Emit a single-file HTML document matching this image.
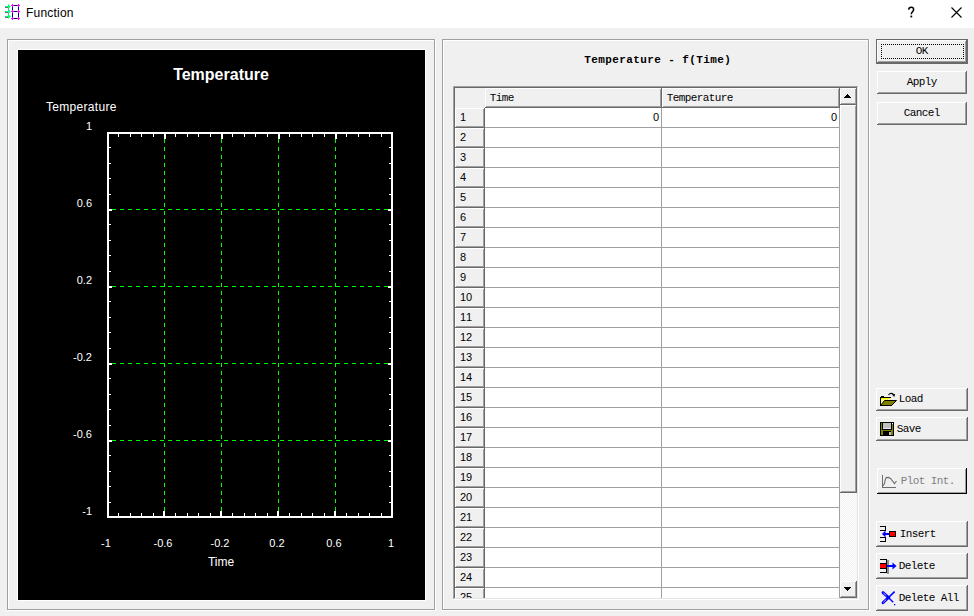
<!DOCTYPE html><html><head><meta charset="utf-8"><style>html,body{margin:0;padding:0;}body{width:974px;height:616px;position:relative;overflow:hidden;background:#f0f0f0;}div{box-sizing:border-box}</style></head><body>
<div style="position:absolute;left:0px;top:0px;width:974px;height:28px;background:#ffffff;"></div>
<svg style="position:absolute;left:0;top:0" width="30" height="28" shape-rendering="crispEdges">
<rect x="5" y="7" width="4" height="1" fill="#7a6a6a"/><rect x="5" y="12" width="4" height="1" fill="#7a6a6a"/><rect x="5" y="17" width="4" height="1" fill="#7a6a6a"/>
<rect x="8" y="8" width="1" height="9" fill="#808080"/>
<rect x="5" y="6" width="4" height="1" fill="#00ff80"/><rect x="5" y="11" width="4" height="1" fill="#00ff80"/><rect x="5" y="16" width="4" height="1" fill="#00ff80"/>
<polygon points="8,4 11,6.5 8,9" fill="#00ff80" shape-rendering="auto"/>
<polygon points="8,9 11,11.5 8,14" fill="#00ff80" shape-rendering="auto"/>
<polygon points="8,14 11,16.5 8,19" fill="#00ff80" shape-rendering="auto"/>
<rect x="12" y="5" width="1" height="14" fill="#000080"/><rect x="18" y="5" width="1" height="14" fill="#000080"/>
<rect x="12" y="5" width="7" height="1" fill="#000080"/><rect x="12" y="11" width="7" height="1" fill="#000080"/><rect x="12" y="18" width="7" height="1" fill="#000080"/>
<rect x="11" y="5" width="3" height="1" fill="#ff00ff"/><rect x="12" y="4" width="1" height="3" fill="#ff00ff"/><rect x="11" y="11" width="3" height="1" fill="#ff00ff"/><rect x="12" y="10" width="1" height="3" fill="#ff00ff"/><rect x="11" y="18" width="3" height="1" fill="#ff00ff"/><rect x="12" y="17" width="1" height="3" fill="#ff00ff"/><rect x="17" y="5" width="3" height="1" fill="#ff00ff"/><rect x="18" y="4" width="1" height="3" fill="#ff00ff"/><rect x="17" y="11" width="3" height="1" fill="#ff00ff"/><rect x="18" y="10" width="1" height="3" fill="#ff00ff"/><rect x="17" y="18" width="3" height="1" fill="#ff00ff"/><rect x="18" y="17" width="1" height="3" fill="#ff00ff"/>
</svg>
<svg style="position:absolute;left:900px;top:0" width="20" height="28"><path d="M8.6 9.6 C8.8 7.6 10.2 7.2 11.2 7.2 C12.6 7.2 13.6 8 13.6 9.4 C13.6 11.6 11.3 11.8 11.3 14.2" stroke="#000" stroke-width="1.5" fill="none"/><rect x="10.4" y="15.6" width="1.8" height="1.8" fill="#000"/></svg>
<svg style="position:absolute;left:950px;top:6px" width="13" height="13"><path d="M1.5 1.5 L11.5 11.5 M11.5 1.5 L1.5 11.5" stroke="#000" stroke-width="1.1" fill="none"/></svg>
<div style="position:absolute;left:7px;top:39px;width:428px;height:1px;background:#a0a0a0;"></div>
<div style="position:absolute;left:7px;top:39px;width:1px;height:571px;background:#a0a0a0;"></div>
<div style="position:absolute;left:8px;top:40px;width:428px;height:1px;background:#ffffff;"></div>
<div style="position:absolute;left:8px;top:40px;width:1px;height:571px;background:#ffffff;"></div>
<div style="position:absolute;left:8px;top:609px;width:427px;height:1px;background:#a0a0a0;"></div>
<div style="position:absolute;left:434px;top:40px;width:1px;height:570px;background:#a0a0a0;"></div>
<div style="position:absolute;left:7px;top:610px;width:429px;height:1px;background:#ffffff;"></div>
<div style="position:absolute;left:435px;top:39px;width:1px;height:572px;background:#ffffff;"></div>
<div style="position:absolute;left:442px;top:39px;width:427px;height:1px;background:#a0a0a0;"></div>
<div style="position:absolute;left:442px;top:39px;width:1px;height:571px;background:#a0a0a0;"></div>
<div style="position:absolute;left:443px;top:40px;width:427px;height:1px;background:#ffffff;"></div>
<div style="position:absolute;left:443px;top:40px;width:1px;height:571px;background:#ffffff;"></div>
<div style="position:absolute;left:443px;top:609px;width:426px;height:1px;background:#a0a0a0;"></div>
<div style="position:absolute;left:868px;top:40px;width:1px;height:570px;background:#a0a0a0;"></div>
<div style="position:absolute;left:442px;top:610px;width:428px;height:1px;background:#ffffff;"></div>
<div style="position:absolute;left:869px;top:39px;width:1px;height:572px;background:#ffffff;"></div>
<div style="position:absolute;left:17px;top:49px;width:409px;height:552px;background:#ffffff;"></div>
<div style="position:absolute;left:18px;top:50px;width:407px;height:550px;background:#000;"></div>
<svg style="position:absolute;left:0;top:0" width="974" height="616" shape-rendering="crispEdges"><line x1="164.5" y1="139" x2="164.5" y2="516" stroke="#00ff00" stroke-width="1" stroke-dasharray="4 4"/><line x1="221.5" y1="139" x2="221.5" y2="516" stroke="#00ff00" stroke-width="1" stroke-dasharray="4 4"/><line x1="278.5" y1="139" x2="278.5" y2="516" stroke="#00ff00" stroke-width="1" stroke-dasharray="4 4"/><line x1="335.5" y1="139" x2="335.5" y2="516" stroke="#00ff00" stroke-width="1" stroke-dasharray="4 4"/><line x1="112" y1="209.5" x2="391" y2="209.5" stroke="#00ff00" stroke-width="1" stroke-dasharray="4 4"/><line x1="112" y1="286.5" x2="391" y2="286.5" stroke="#00ff00" stroke-width="1" stroke-dasharray="4 4"/><line x1="112" y1="363.5" x2="391" y2="363.5" stroke="#00ff00" stroke-width="1" stroke-dasharray="4 4"/><line x1="112" y1="440.5" x2="391" y2="440.5" stroke="#00ff00" stroke-width="1" stroke-dasharray="4 4"/><rect x="107" y="132" width="286" height="2" fill="#fff"/><rect x="107" y="516" width="286" height="2" fill="#fff"/><rect x="107" y="132" width="2" height="386" fill="#fff"/><rect x="391" y="132" width="2" height="386" fill="#fff"/><rect x="118" y="134" width="1" height="3" fill="#fff"/><rect x="118" y="513" width="1" height="3" fill="#fff"/><rect x="109" y="147" width="2" height="1" fill="#fff"/><rect x="389" y="147" width="2" height="1" fill="#fff"/><rect x="130" y="134" width="1" height="3" fill="#fff"/><rect x="130" y="513" width="1" height="3" fill="#fff"/><rect x="109" y="163" width="2" height="1" fill="#fff"/><rect x="389" y="163" width="2" height="1" fill="#fff"/><rect x="141" y="134" width="1" height="3" fill="#fff"/><rect x="141" y="513" width="1" height="3" fill="#fff"/><rect x="109" y="178" width="2" height="1" fill="#fff"/><rect x="389" y="178" width="2" height="1" fill="#fff"/><rect x="153" y="134" width="1" height="3" fill="#fff"/><rect x="153" y="513" width="1" height="3" fill="#fff"/><rect x="109" y="194" width="2" height="1" fill="#fff"/><rect x="389" y="194" width="2" height="1" fill="#fff"/><rect x="164" y="134" width="2" height="5" fill="#fff"/><rect x="163" y="511" width="2" height="5" fill="#fff"/><rect x="109" y="209" width="3" height="2" fill="#fff"/><rect x="388" y="209" width="3" height="2" fill="#fff"/><rect x="175" y="134" width="1" height="3" fill="#fff"/><rect x="175" y="513" width="1" height="3" fill="#fff"/><rect x="109" y="224" width="2" height="1" fill="#fff"/><rect x="389" y="224" width="2" height="1" fill="#fff"/><rect x="187" y="134" width="1" height="3" fill="#fff"/><rect x="187" y="513" width="1" height="3" fill="#fff"/><rect x="109" y="240" width="2" height="1" fill="#fff"/><rect x="389" y="240" width="2" height="1" fill="#fff"/><rect x="198" y="134" width="1" height="3" fill="#fff"/><rect x="198" y="513" width="1" height="3" fill="#fff"/><rect x="109" y="255" width="2" height="1" fill="#fff"/><rect x="389" y="255" width="2" height="1" fill="#fff"/><rect x="210" y="134" width="1" height="3" fill="#fff"/><rect x="210" y="513" width="1" height="3" fill="#fff"/><rect x="109" y="271" width="2" height="1" fill="#fff"/><rect x="389" y="271" width="2" height="1" fill="#fff"/><rect x="221" y="134" width="2" height="5" fill="#fff"/><rect x="220" y="511" width="2" height="5" fill="#fff"/><rect x="109" y="286" width="3" height="2" fill="#fff"/><rect x="388" y="286" width="3" height="2" fill="#fff"/><rect x="232" y="134" width="1" height="3" fill="#fff"/><rect x="232" y="513" width="1" height="3" fill="#fff"/><rect x="109" y="301" width="2" height="1" fill="#fff"/><rect x="389" y="301" width="2" height="1" fill="#fff"/><rect x="244" y="134" width="1" height="3" fill="#fff"/><rect x="244" y="513" width="1" height="3" fill="#fff"/><rect x="109" y="317" width="2" height="1" fill="#fff"/><rect x="389" y="317" width="2" height="1" fill="#fff"/><rect x="255" y="134" width="1" height="3" fill="#fff"/><rect x="255" y="513" width="1" height="3" fill="#fff"/><rect x="109" y="332" width="2" height="1" fill="#fff"/><rect x="389" y="332" width="2" height="1" fill="#fff"/><rect x="267" y="134" width="1" height="3" fill="#fff"/><rect x="267" y="513" width="1" height="3" fill="#fff"/><rect x="109" y="348" width="2" height="1" fill="#fff"/><rect x="389" y="348" width="2" height="1" fill="#fff"/><rect x="278" y="134" width="2" height="5" fill="#fff"/><rect x="277" y="511" width="2" height="5" fill="#fff"/><rect x="109" y="363" width="3" height="2" fill="#fff"/><rect x="388" y="363" width="3" height="2" fill="#fff"/><rect x="289" y="134" width="1" height="3" fill="#fff"/><rect x="289" y="513" width="1" height="3" fill="#fff"/><rect x="109" y="378" width="2" height="1" fill="#fff"/><rect x="389" y="378" width="2" height="1" fill="#fff"/><rect x="301" y="134" width="1" height="3" fill="#fff"/><rect x="301" y="513" width="1" height="3" fill="#fff"/><rect x="109" y="394" width="2" height="1" fill="#fff"/><rect x="389" y="394" width="2" height="1" fill="#fff"/><rect x="312" y="134" width="1" height="3" fill="#fff"/><rect x="312" y="513" width="1" height="3" fill="#fff"/><rect x="109" y="409" width="2" height="1" fill="#fff"/><rect x="389" y="409" width="2" height="1" fill="#fff"/><rect x="324" y="134" width="1" height="3" fill="#fff"/><rect x="324" y="513" width="1" height="3" fill="#fff"/><rect x="109" y="425" width="2" height="1" fill="#fff"/><rect x="389" y="425" width="2" height="1" fill="#fff"/><rect x="335" y="134" width="2" height="5" fill="#fff"/><rect x="334" y="511" width="2" height="5" fill="#fff"/><rect x="109" y="440" width="3" height="2" fill="#fff"/><rect x="388" y="440" width="3" height="2" fill="#fff"/><rect x="346" y="134" width="1" height="3" fill="#fff"/><rect x="346" y="513" width="1" height="3" fill="#fff"/><rect x="109" y="455" width="2" height="1" fill="#fff"/><rect x="389" y="455" width="2" height="1" fill="#fff"/><rect x="358" y="134" width="1" height="3" fill="#fff"/><rect x="358" y="513" width="1" height="3" fill="#fff"/><rect x="109" y="471" width="2" height="1" fill="#fff"/><rect x="389" y="471" width="2" height="1" fill="#fff"/><rect x="369" y="134" width="1" height="3" fill="#fff"/><rect x="369" y="513" width="1" height="3" fill="#fff"/><rect x="109" y="486" width="2" height="1" fill="#fff"/><rect x="389" y="486" width="2" height="1" fill="#fff"/><rect x="381" y="134" width="1" height="3" fill="#fff"/><rect x="381" y="513" width="1" height="3" fill="#fff"/><rect x="109" y="502" width="2" height="1" fill="#fff"/><rect x="389" y="502" width="2" height="1" fill="#fff"/></svg>
<div style="position:absolute;left:453px;top:86px;width:405px;height:1px;background:#a0a0a0;"></div>
<div style="position:absolute;left:453px;top:86px;width:1px;height:513px;background:#a0a0a0;"></div>
<div style="position:absolute;left:454px;top:87px;width:403px;height:1px;background:#696969;"></div>
<div style="position:absolute;left:454px;top:87px;width:1px;height:511px;background:#696969;"></div>
<div style="position:absolute;left:454px;top:598px;width:404px;height:1px;background:#e3e3e3;"></div>
<div style="position:absolute;left:857px;top:87px;width:1px;height:512px;background:#e3e3e3;"></div>
<div style="position:absolute;left:453px;top:599px;width:406px;height:1px;background:#ffffff;"></div>
<div style="position:absolute;left:858px;top:86px;width:1px;height:514px;background:#ffffff;"></div>
<div style="position:absolute;left:485px;top:108px;width:355px;height:490px;background:#ffffff;"></div>
<div style="position:absolute;left:485px;top:127px;width:355px;height:1px;background:#a0a0a0;"></div>
<div style="position:absolute;left:485px;top:147px;width:355px;height:1px;background:#a0a0a0;"></div>
<div style="position:absolute;left:485px;top:167px;width:355px;height:1px;background:#a0a0a0;"></div>
<div style="position:absolute;left:485px;top:187px;width:355px;height:1px;background:#a0a0a0;"></div>
<div style="position:absolute;left:485px;top:207px;width:355px;height:1px;background:#a0a0a0;"></div>
<div style="position:absolute;left:485px;top:227px;width:355px;height:1px;background:#a0a0a0;"></div>
<div style="position:absolute;left:485px;top:247px;width:355px;height:1px;background:#a0a0a0;"></div>
<div style="position:absolute;left:485px;top:267px;width:355px;height:1px;background:#a0a0a0;"></div>
<div style="position:absolute;left:485px;top:287px;width:355px;height:1px;background:#a0a0a0;"></div>
<div style="position:absolute;left:485px;top:307px;width:355px;height:1px;background:#a0a0a0;"></div>
<div style="position:absolute;left:485px;top:327px;width:355px;height:1px;background:#a0a0a0;"></div>
<div style="position:absolute;left:485px;top:347px;width:355px;height:1px;background:#a0a0a0;"></div>
<div style="position:absolute;left:485px;top:367px;width:355px;height:1px;background:#a0a0a0;"></div>
<div style="position:absolute;left:485px;top:387px;width:355px;height:1px;background:#a0a0a0;"></div>
<div style="position:absolute;left:485px;top:407px;width:355px;height:1px;background:#a0a0a0;"></div>
<div style="position:absolute;left:485px;top:427px;width:355px;height:1px;background:#a0a0a0;"></div>
<div style="position:absolute;left:485px;top:447px;width:355px;height:1px;background:#a0a0a0;"></div>
<div style="position:absolute;left:485px;top:467px;width:355px;height:1px;background:#a0a0a0;"></div>
<div style="position:absolute;left:485px;top:487px;width:355px;height:1px;background:#a0a0a0;"></div>
<div style="position:absolute;left:485px;top:507px;width:355px;height:1px;background:#a0a0a0;"></div>
<div style="position:absolute;left:485px;top:527px;width:355px;height:1px;background:#a0a0a0;"></div>
<div style="position:absolute;left:485px;top:547px;width:355px;height:1px;background:#a0a0a0;"></div>
<div style="position:absolute;left:485px;top:567px;width:355px;height:1px;background:#a0a0a0;"></div>
<div style="position:absolute;left:485px;top:587px;width:355px;height:1px;background:#a0a0a0;"></div>
<div style="position:absolute;left:661px;top:108px;width:1px;height:490px;background:#a0a0a0;"></div>
<div style="position:absolute;left:839px;top:108px;width:1px;height:490px;background:#a0a0a0;"></div>
<div style="position:absolute;left:455px;top:88px;width:30px;height:20px;background:#f0f0f0;"></div>
<div style="position:absolute;left:485px;top:88px;width:177px;height:20px;background:#f0f0f0;"></div>
<div style="position:absolute;left:485px;top:88px;width:177px;height:1px;background:#ffffff;"></div>
<div style="position:absolute;left:485px;top:88px;width:1px;height:20px;background:#ffffff;"></div>
<div style="position:absolute;left:486px;top:106px;width:175px;height:1px;background:#a0a0a0;"></div>
<div style="position:absolute;left:660px;top:89px;width:1px;height:18px;background:#a0a0a0;"></div>
<div style="position:absolute;left:485px;top:107px;width:177px;height:1px;background:#696969;"></div>
<div style="position:absolute;left:661px;top:88px;width:1px;height:20px;background:#696969;"></div>
<div style="position:absolute;left:662px;top:88px;width:178px;height:20px;background:#f0f0f0;"></div>
<div style="position:absolute;left:662px;top:88px;width:178px;height:1px;background:#ffffff;"></div>
<div style="position:absolute;left:662px;top:88px;width:1px;height:20px;background:#ffffff;"></div>
<div style="position:absolute;left:663px;top:106px;width:176px;height:1px;background:#a0a0a0;"></div>
<div style="position:absolute;left:838px;top:89px;width:1px;height:18px;background:#a0a0a0;"></div>
<div style="position:absolute;left:662px;top:107px;width:178px;height:1px;background:#696969;"></div>
<div style="position:absolute;left:839px;top:88px;width:1px;height:20px;background:#696969;"></div>
<div style="position:absolute;left:455px;top:108px;width:30px;height:20px;background:#f0f0f0;"></div>
<div style="position:absolute;left:455px;top:108px;width:30px;height:1px;background:#ffffff;"></div>
<div style="position:absolute;left:455px;top:108px;width:1px;height:20px;background:#ffffff;"></div>
<div style="position:absolute;left:483px;top:109px;width:1px;height:19px;background:#a0a0a0;"></div>
<div style="position:absolute;left:484px;top:108px;width:1px;height:20px;background:#696969;"></div>
<div style="position:absolute;left:456px;top:126px;width:28px;height:1px;background:#a0a0a0;"></div>
<div style="position:absolute;left:455px;top:127px;width:30px;height:1px;background:#696969;"></div>
<div style="position:absolute;left:455px;top:128px;width:30px;height:20px;background:#f0f0f0;"></div>
<div style="position:absolute;left:455px;top:128px;width:30px;height:1px;background:#ffffff;"></div>
<div style="position:absolute;left:455px;top:128px;width:1px;height:20px;background:#ffffff;"></div>
<div style="position:absolute;left:483px;top:129px;width:1px;height:19px;background:#a0a0a0;"></div>
<div style="position:absolute;left:484px;top:128px;width:1px;height:20px;background:#696969;"></div>
<div style="position:absolute;left:456px;top:146px;width:28px;height:1px;background:#a0a0a0;"></div>
<div style="position:absolute;left:455px;top:147px;width:30px;height:1px;background:#696969;"></div>
<div style="position:absolute;left:455px;top:148px;width:30px;height:20px;background:#f0f0f0;"></div>
<div style="position:absolute;left:455px;top:148px;width:30px;height:1px;background:#ffffff;"></div>
<div style="position:absolute;left:455px;top:148px;width:1px;height:20px;background:#ffffff;"></div>
<div style="position:absolute;left:483px;top:149px;width:1px;height:19px;background:#a0a0a0;"></div>
<div style="position:absolute;left:484px;top:148px;width:1px;height:20px;background:#696969;"></div>
<div style="position:absolute;left:456px;top:166px;width:28px;height:1px;background:#a0a0a0;"></div>
<div style="position:absolute;left:455px;top:167px;width:30px;height:1px;background:#696969;"></div>
<div style="position:absolute;left:455px;top:168px;width:30px;height:20px;background:#f0f0f0;"></div>
<div style="position:absolute;left:455px;top:168px;width:30px;height:1px;background:#ffffff;"></div>
<div style="position:absolute;left:455px;top:168px;width:1px;height:20px;background:#ffffff;"></div>
<div style="position:absolute;left:483px;top:169px;width:1px;height:19px;background:#a0a0a0;"></div>
<div style="position:absolute;left:484px;top:168px;width:1px;height:20px;background:#696969;"></div>
<div style="position:absolute;left:456px;top:186px;width:28px;height:1px;background:#a0a0a0;"></div>
<div style="position:absolute;left:455px;top:187px;width:30px;height:1px;background:#696969;"></div>
<div style="position:absolute;left:455px;top:188px;width:30px;height:20px;background:#f0f0f0;"></div>
<div style="position:absolute;left:455px;top:188px;width:30px;height:1px;background:#ffffff;"></div>
<div style="position:absolute;left:455px;top:188px;width:1px;height:20px;background:#ffffff;"></div>
<div style="position:absolute;left:483px;top:189px;width:1px;height:19px;background:#a0a0a0;"></div>
<div style="position:absolute;left:484px;top:188px;width:1px;height:20px;background:#696969;"></div>
<div style="position:absolute;left:456px;top:206px;width:28px;height:1px;background:#a0a0a0;"></div>
<div style="position:absolute;left:455px;top:207px;width:30px;height:1px;background:#696969;"></div>
<div style="position:absolute;left:455px;top:208px;width:30px;height:20px;background:#f0f0f0;"></div>
<div style="position:absolute;left:455px;top:208px;width:30px;height:1px;background:#ffffff;"></div>
<div style="position:absolute;left:455px;top:208px;width:1px;height:20px;background:#ffffff;"></div>
<div style="position:absolute;left:483px;top:209px;width:1px;height:19px;background:#a0a0a0;"></div>
<div style="position:absolute;left:484px;top:208px;width:1px;height:20px;background:#696969;"></div>
<div style="position:absolute;left:456px;top:226px;width:28px;height:1px;background:#a0a0a0;"></div>
<div style="position:absolute;left:455px;top:227px;width:30px;height:1px;background:#696969;"></div>
<div style="position:absolute;left:455px;top:228px;width:30px;height:20px;background:#f0f0f0;"></div>
<div style="position:absolute;left:455px;top:228px;width:30px;height:1px;background:#ffffff;"></div>
<div style="position:absolute;left:455px;top:228px;width:1px;height:20px;background:#ffffff;"></div>
<div style="position:absolute;left:483px;top:229px;width:1px;height:19px;background:#a0a0a0;"></div>
<div style="position:absolute;left:484px;top:228px;width:1px;height:20px;background:#696969;"></div>
<div style="position:absolute;left:456px;top:246px;width:28px;height:1px;background:#a0a0a0;"></div>
<div style="position:absolute;left:455px;top:247px;width:30px;height:1px;background:#696969;"></div>
<div style="position:absolute;left:455px;top:248px;width:30px;height:20px;background:#f0f0f0;"></div>
<div style="position:absolute;left:455px;top:248px;width:30px;height:1px;background:#ffffff;"></div>
<div style="position:absolute;left:455px;top:248px;width:1px;height:20px;background:#ffffff;"></div>
<div style="position:absolute;left:483px;top:249px;width:1px;height:19px;background:#a0a0a0;"></div>
<div style="position:absolute;left:484px;top:248px;width:1px;height:20px;background:#696969;"></div>
<div style="position:absolute;left:456px;top:266px;width:28px;height:1px;background:#a0a0a0;"></div>
<div style="position:absolute;left:455px;top:267px;width:30px;height:1px;background:#696969;"></div>
<div style="position:absolute;left:455px;top:268px;width:30px;height:20px;background:#f0f0f0;"></div>
<div style="position:absolute;left:455px;top:268px;width:30px;height:1px;background:#ffffff;"></div>
<div style="position:absolute;left:455px;top:268px;width:1px;height:20px;background:#ffffff;"></div>
<div style="position:absolute;left:483px;top:269px;width:1px;height:19px;background:#a0a0a0;"></div>
<div style="position:absolute;left:484px;top:268px;width:1px;height:20px;background:#696969;"></div>
<div style="position:absolute;left:456px;top:286px;width:28px;height:1px;background:#a0a0a0;"></div>
<div style="position:absolute;left:455px;top:287px;width:30px;height:1px;background:#696969;"></div>
<div style="position:absolute;left:455px;top:288px;width:30px;height:20px;background:#f0f0f0;"></div>
<div style="position:absolute;left:455px;top:288px;width:30px;height:1px;background:#ffffff;"></div>
<div style="position:absolute;left:455px;top:288px;width:1px;height:20px;background:#ffffff;"></div>
<div style="position:absolute;left:483px;top:289px;width:1px;height:19px;background:#a0a0a0;"></div>
<div style="position:absolute;left:484px;top:288px;width:1px;height:20px;background:#696969;"></div>
<div style="position:absolute;left:456px;top:306px;width:28px;height:1px;background:#a0a0a0;"></div>
<div style="position:absolute;left:455px;top:307px;width:30px;height:1px;background:#696969;"></div>
<div style="position:absolute;left:455px;top:308px;width:30px;height:20px;background:#f0f0f0;"></div>
<div style="position:absolute;left:455px;top:308px;width:30px;height:1px;background:#ffffff;"></div>
<div style="position:absolute;left:455px;top:308px;width:1px;height:20px;background:#ffffff;"></div>
<div style="position:absolute;left:483px;top:309px;width:1px;height:19px;background:#a0a0a0;"></div>
<div style="position:absolute;left:484px;top:308px;width:1px;height:20px;background:#696969;"></div>
<div style="position:absolute;left:456px;top:326px;width:28px;height:1px;background:#a0a0a0;"></div>
<div style="position:absolute;left:455px;top:327px;width:30px;height:1px;background:#696969;"></div>
<div style="position:absolute;left:455px;top:328px;width:30px;height:20px;background:#f0f0f0;"></div>
<div style="position:absolute;left:455px;top:328px;width:30px;height:1px;background:#ffffff;"></div>
<div style="position:absolute;left:455px;top:328px;width:1px;height:20px;background:#ffffff;"></div>
<div style="position:absolute;left:483px;top:329px;width:1px;height:19px;background:#a0a0a0;"></div>
<div style="position:absolute;left:484px;top:328px;width:1px;height:20px;background:#696969;"></div>
<div style="position:absolute;left:456px;top:346px;width:28px;height:1px;background:#a0a0a0;"></div>
<div style="position:absolute;left:455px;top:347px;width:30px;height:1px;background:#696969;"></div>
<div style="position:absolute;left:455px;top:348px;width:30px;height:20px;background:#f0f0f0;"></div>
<div style="position:absolute;left:455px;top:348px;width:30px;height:1px;background:#ffffff;"></div>
<div style="position:absolute;left:455px;top:348px;width:1px;height:20px;background:#ffffff;"></div>
<div style="position:absolute;left:483px;top:349px;width:1px;height:19px;background:#a0a0a0;"></div>
<div style="position:absolute;left:484px;top:348px;width:1px;height:20px;background:#696969;"></div>
<div style="position:absolute;left:456px;top:366px;width:28px;height:1px;background:#a0a0a0;"></div>
<div style="position:absolute;left:455px;top:367px;width:30px;height:1px;background:#696969;"></div>
<div style="position:absolute;left:455px;top:368px;width:30px;height:20px;background:#f0f0f0;"></div>
<div style="position:absolute;left:455px;top:368px;width:30px;height:1px;background:#ffffff;"></div>
<div style="position:absolute;left:455px;top:368px;width:1px;height:20px;background:#ffffff;"></div>
<div style="position:absolute;left:483px;top:369px;width:1px;height:19px;background:#a0a0a0;"></div>
<div style="position:absolute;left:484px;top:368px;width:1px;height:20px;background:#696969;"></div>
<div style="position:absolute;left:456px;top:386px;width:28px;height:1px;background:#a0a0a0;"></div>
<div style="position:absolute;left:455px;top:387px;width:30px;height:1px;background:#696969;"></div>
<div style="position:absolute;left:455px;top:388px;width:30px;height:20px;background:#f0f0f0;"></div>
<div style="position:absolute;left:455px;top:388px;width:30px;height:1px;background:#ffffff;"></div>
<div style="position:absolute;left:455px;top:388px;width:1px;height:20px;background:#ffffff;"></div>
<div style="position:absolute;left:483px;top:389px;width:1px;height:19px;background:#a0a0a0;"></div>
<div style="position:absolute;left:484px;top:388px;width:1px;height:20px;background:#696969;"></div>
<div style="position:absolute;left:456px;top:406px;width:28px;height:1px;background:#a0a0a0;"></div>
<div style="position:absolute;left:455px;top:407px;width:30px;height:1px;background:#696969;"></div>
<div style="position:absolute;left:455px;top:408px;width:30px;height:20px;background:#f0f0f0;"></div>
<div style="position:absolute;left:455px;top:408px;width:30px;height:1px;background:#ffffff;"></div>
<div style="position:absolute;left:455px;top:408px;width:1px;height:20px;background:#ffffff;"></div>
<div style="position:absolute;left:483px;top:409px;width:1px;height:19px;background:#a0a0a0;"></div>
<div style="position:absolute;left:484px;top:408px;width:1px;height:20px;background:#696969;"></div>
<div style="position:absolute;left:456px;top:426px;width:28px;height:1px;background:#a0a0a0;"></div>
<div style="position:absolute;left:455px;top:427px;width:30px;height:1px;background:#696969;"></div>
<div style="position:absolute;left:455px;top:428px;width:30px;height:20px;background:#f0f0f0;"></div>
<div style="position:absolute;left:455px;top:428px;width:30px;height:1px;background:#ffffff;"></div>
<div style="position:absolute;left:455px;top:428px;width:1px;height:20px;background:#ffffff;"></div>
<div style="position:absolute;left:483px;top:429px;width:1px;height:19px;background:#a0a0a0;"></div>
<div style="position:absolute;left:484px;top:428px;width:1px;height:20px;background:#696969;"></div>
<div style="position:absolute;left:456px;top:446px;width:28px;height:1px;background:#a0a0a0;"></div>
<div style="position:absolute;left:455px;top:447px;width:30px;height:1px;background:#696969;"></div>
<div style="position:absolute;left:455px;top:448px;width:30px;height:20px;background:#f0f0f0;"></div>
<div style="position:absolute;left:455px;top:448px;width:30px;height:1px;background:#ffffff;"></div>
<div style="position:absolute;left:455px;top:448px;width:1px;height:20px;background:#ffffff;"></div>
<div style="position:absolute;left:483px;top:449px;width:1px;height:19px;background:#a0a0a0;"></div>
<div style="position:absolute;left:484px;top:448px;width:1px;height:20px;background:#696969;"></div>
<div style="position:absolute;left:456px;top:466px;width:28px;height:1px;background:#a0a0a0;"></div>
<div style="position:absolute;left:455px;top:467px;width:30px;height:1px;background:#696969;"></div>
<div style="position:absolute;left:455px;top:468px;width:30px;height:20px;background:#f0f0f0;"></div>
<div style="position:absolute;left:455px;top:468px;width:30px;height:1px;background:#ffffff;"></div>
<div style="position:absolute;left:455px;top:468px;width:1px;height:20px;background:#ffffff;"></div>
<div style="position:absolute;left:483px;top:469px;width:1px;height:19px;background:#a0a0a0;"></div>
<div style="position:absolute;left:484px;top:468px;width:1px;height:20px;background:#696969;"></div>
<div style="position:absolute;left:456px;top:486px;width:28px;height:1px;background:#a0a0a0;"></div>
<div style="position:absolute;left:455px;top:487px;width:30px;height:1px;background:#696969;"></div>
<div style="position:absolute;left:455px;top:488px;width:30px;height:20px;background:#f0f0f0;"></div>
<div style="position:absolute;left:455px;top:488px;width:30px;height:1px;background:#ffffff;"></div>
<div style="position:absolute;left:455px;top:488px;width:1px;height:20px;background:#ffffff;"></div>
<div style="position:absolute;left:483px;top:489px;width:1px;height:19px;background:#a0a0a0;"></div>
<div style="position:absolute;left:484px;top:488px;width:1px;height:20px;background:#696969;"></div>
<div style="position:absolute;left:456px;top:506px;width:28px;height:1px;background:#a0a0a0;"></div>
<div style="position:absolute;left:455px;top:507px;width:30px;height:1px;background:#696969;"></div>
<div style="position:absolute;left:455px;top:508px;width:30px;height:20px;background:#f0f0f0;"></div>
<div style="position:absolute;left:455px;top:508px;width:30px;height:1px;background:#ffffff;"></div>
<div style="position:absolute;left:455px;top:508px;width:1px;height:20px;background:#ffffff;"></div>
<div style="position:absolute;left:483px;top:509px;width:1px;height:19px;background:#a0a0a0;"></div>
<div style="position:absolute;left:484px;top:508px;width:1px;height:20px;background:#696969;"></div>
<div style="position:absolute;left:456px;top:526px;width:28px;height:1px;background:#a0a0a0;"></div>
<div style="position:absolute;left:455px;top:527px;width:30px;height:1px;background:#696969;"></div>
<div style="position:absolute;left:455px;top:528px;width:30px;height:20px;background:#f0f0f0;"></div>
<div style="position:absolute;left:455px;top:528px;width:30px;height:1px;background:#ffffff;"></div>
<div style="position:absolute;left:455px;top:528px;width:1px;height:20px;background:#ffffff;"></div>
<div style="position:absolute;left:483px;top:529px;width:1px;height:19px;background:#a0a0a0;"></div>
<div style="position:absolute;left:484px;top:528px;width:1px;height:20px;background:#696969;"></div>
<div style="position:absolute;left:456px;top:546px;width:28px;height:1px;background:#a0a0a0;"></div>
<div style="position:absolute;left:455px;top:547px;width:30px;height:1px;background:#696969;"></div>
<div style="position:absolute;left:455px;top:548px;width:30px;height:20px;background:#f0f0f0;"></div>
<div style="position:absolute;left:455px;top:548px;width:30px;height:1px;background:#ffffff;"></div>
<div style="position:absolute;left:455px;top:548px;width:1px;height:20px;background:#ffffff;"></div>
<div style="position:absolute;left:483px;top:549px;width:1px;height:19px;background:#a0a0a0;"></div>
<div style="position:absolute;left:484px;top:548px;width:1px;height:20px;background:#696969;"></div>
<div style="position:absolute;left:456px;top:566px;width:28px;height:1px;background:#a0a0a0;"></div>
<div style="position:absolute;left:455px;top:567px;width:30px;height:1px;background:#696969;"></div>
<div style="position:absolute;left:455px;top:568px;width:30px;height:20px;background:#f0f0f0;"></div>
<div style="position:absolute;left:455px;top:568px;width:30px;height:1px;background:#ffffff;"></div>
<div style="position:absolute;left:455px;top:568px;width:1px;height:20px;background:#ffffff;"></div>
<div style="position:absolute;left:483px;top:569px;width:1px;height:19px;background:#a0a0a0;"></div>
<div style="position:absolute;left:484px;top:568px;width:1px;height:20px;background:#696969;"></div>
<div style="position:absolute;left:456px;top:586px;width:28px;height:1px;background:#a0a0a0;"></div>
<div style="position:absolute;left:455px;top:587px;width:30px;height:1px;background:#696969;"></div>
<div style="position:absolute;left:455px;top:588px;width:30px;height:10px;background:#f0f0f0;"></div>
<div style="position:absolute;left:455px;top:588px;width:30px;height:1px;background:#ffffff;"></div>
<div style="position:absolute;left:455px;top:588px;width:1px;height:10px;background:#ffffff;"></div>
<div style="position:absolute;left:483px;top:589px;width:1px;height:9px;background:#a0a0a0;"></div>
<div style="position:absolute;left:484px;top:588px;width:1px;height:10px;background:#696969;"></div>
<div style="position:absolute;left:840px;top:493px;width:17px;height:88px;background:repeating-conic-gradient(#fff 0 25%, #f0f0f0 0 50%) 0 0/2px 2px"></div>
<div style="position:absolute;left:840px;top:88px;width:17px;height:17px;background:#f0f0f0;"></div>
<div style="position:absolute;left:840px;top:88px;width:17px;height:1px;background:#ffffff;"></div>
<div style="position:absolute;left:840px;top:88px;width:1px;height:17px;background:#ffffff;"></div>
<div style="position:absolute;left:841px;top:103px;width:15px;height:1px;background:#a0a0a0;"></div>
<div style="position:absolute;left:855px;top:89px;width:1px;height:15px;background:#a0a0a0;"></div>
<div style="position:absolute;left:840px;top:104px;width:17px;height:1px;background:#696969;"></div>
<div style="position:absolute;left:856px;top:88px;width:1px;height:17px;background:#696969;"></div>
<div style="position:absolute;left:840px;top:105px;width:17px;height:388px;background:#f0f0f0;"></div>
<div style="position:absolute;left:840px;top:105px;width:17px;height:1px;background:#ffffff;"></div>
<div style="position:absolute;left:840px;top:105px;width:1px;height:388px;background:#ffffff;"></div>
<div style="position:absolute;left:841px;top:491px;width:15px;height:1px;background:#a0a0a0;"></div>
<div style="position:absolute;left:855px;top:106px;width:1px;height:386px;background:#a0a0a0;"></div>
<div style="position:absolute;left:840px;top:492px;width:17px;height:1px;background:#696969;"></div>
<div style="position:absolute;left:856px;top:105px;width:1px;height:388px;background:#696969;"></div>
<div style="position:absolute;left:840px;top:581px;width:17px;height:17px;background:#f0f0f0;"></div>
<div style="position:absolute;left:840px;top:581px;width:17px;height:1px;background:#ffffff;"></div>
<div style="position:absolute;left:840px;top:581px;width:1px;height:17px;background:#ffffff;"></div>
<div style="position:absolute;left:841px;top:596px;width:15px;height:1px;background:#a0a0a0;"></div>
<div style="position:absolute;left:855px;top:582px;width:1px;height:15px;background:#a0a0a0;"></div>
<div style="position:absolute;left:840px;top:597px;width:17px;height:1px;background:#696969;"></div>
<div style="position:absolute;left:856px;top:581px;width:1px;height:17px;background:#696969;"></div>
<svg style="position:absolute;left:840px;top:88px" width="17" height="17" shape-rendering="crispEdges"><rect x="7" y="6" width="1" height="1"/><rect x="6" y="7" width="3" height="1"/><rect x="5" y="8" width="5" height="1"/><rect x="4" y="9" width="7" height="1"/></svg>
<svg style="position:absolute;left:840px;top:581px" width="17" height="17" shape-rendering="crispEdges"><rect x="4" y="6" width="7" height="1"/><rect x="5" y="7" width="5" height="1"/><rect x="6" y="8" width="3" height="1"/><rect x="7" y="9" width="1" height="1"/></svg>
<div style="position:absolute;left:876px;top:39px;width:92px;height:25px;background:#696969;"></div>
<div style="position:absolute;left:877px;top:40px;width:90px;height:23px;background:#f0f0f0;"></div>
<div style="position:absolute;left:877px;top:40px;width:90px;height:1px;background:#ffffff;"></div>
<div style="position:absolute;left:877px;top:40px;width:1px;height:23px;background:#ffffff;"></div>
<div style="position:absolute;left:878px;top:61px;width:88px;height:1px;background:#a0a0a0;"></div>
<div style="position:absolute;left:965px;top:41px;width:1px;height:21px;background:#a0a0a0;"></div>
<div style="position:absolute;left:877px;top:62px;width:90px;height:1px;background:#696969;"></div>
<div style="position:absolute;left:966px;top:40px;width:1px;height:23px;background:#696969;"></div>
<div style="position:absolute;left:881px;top:44px;width:83px;height:15px;border:1px dotted #000"></div>
<div style="position:absolute;left:877px;top:71px;width:90px;height:23px;background:#f0f0f0;"></div>
<div style="position:absolute;left:877px;top:71px;width:90px;height:1px;background:#ffffff;"></div>
<div style="position:absolute;left:877px;top:71px;width:1px;height:23px;background:#ffffff;"></div>
<div style="position:absolute;left:878px;top:92px;width:88px;height:1px;background:#a0a0a0;"></div>
<div style="position:absolute;left:965px;top:72px;width:1px;height:21px;background:#a0a0a0;"></div>
<div style="position:absolute;left:877px;top:93px;width:90px;height:1px;background:#696969;"></div>
<div style="position:absolute;left:966px;top:71px;width:1px;height:23px;background:#696969;"></div>
<div style="position:absolute;left:877px;top:102px;width:90px;height:23px;background:#f0f0f0;"></div>
<div style="position:absolute;left:877px;top:102px;width:90px;height:1px;background:#ffffff;"></div>
<div style="position:absolute;left:877px;top:102px;width:1px;height:23px;background:#ffffff;"></div>
<div style="position:absolute;left:878px;top:123px;width:88px;height:1px;background:#a0a0a0;"></div>
<div style="position:absolute;left:965px;top:103px;width:1px;height:21px;background:#a0a0a0;"></div>
<div style="position:absolute;left:877px;top:124px;width:90px;height:1px;background:#696969;"></div>
<div style="position:absolute;left:966px;top:102px;width:1px;height:23px;background:#696969;"></div>
<div style="position:absolute;left:876px;top:388px;width:92px;height:23px;background:#f0f0f0;"></div>
<div style="position:absolute;left:876px;top:388px;width:92px;height:1px;background:#ffffff;"></div>
<div style="position:absolute;left:876px;top:388px;width:1px;height:23px;background:#ffffff;"></div>
<div style="position:absolute;left:877px;top:409px;width:90px;height:1px;background:#a0a0a0;"></div>
<div style="position:absolute;left:966px;top:389px;width:1px;height:21px;background:#a0a0a0;"></div>
<div style="position:absolute;left:876px;top:410px;width:92px;height:1px;background:#696969;"></div>
<div style="position:absolute;left:967px;top:388px;width:1px;height:23px;background:#696969;"></div>
<div style="position:absolute;left:876px;top:417px;width:92px;height:24px;background:#f0f0f0;"></div>
<div style="position:absolute;left:876px;top:417px;width:92px;height:1px;background:#ffffff;"></div>
<div style="position:absolute;left:876px;top:417px;width:1px;height:24px;background:#ffffff;"></div>
<div style="position:absolute;left:877px;top:439px;width:90px;height:1px;background:#a0a0a0;"></div>
<div style="position:absolute;left:966px;top:418px;width:1px;height:22px;background:#a0a0a0;"></div>
<div style="position:absolute;left:876px;top:440px;width:92px;height:1px;background:#696969;"></div>
<div style="position:absolute;left:967px;top:417px;width:1px;height:24px;background:#696969;"></div>
<div style="position:absolute;left:877px;top:468px;width:90px;height:26px;background:#f0f0f0;"></div>
<div style="position:absolute;left:877px;top:468px;width:90px;height:1px;background:#ffffff;"></div>
<div style="position:absolute;left:877px;top:468px;width:1px;height:26px;background:#ffffff;"></div>
<div style="position:absolute;left:878px;top:492px;width:88px;height:1px;background:#a0a0a0;"></div>
<div style="position:absolute;left:965px;top:469px;width:1px;height:24px;background:#a0a0a0;"></div>
<div style="position:absolute;left:877px;top:493px;width:90px;height:1px;background:#000;"></div>
<div style="position:absolute;left:966px;top:468px;width:1px;height:26px;background:#000;"></div>
<div style="position:absolute;left:876px;top:521px;width:92px;height:26px;background:#f0f0f0;"></div>
<div style="position:absolute;left:876px;top:521px;width:92px;height:1px;background:#ffffff;"></div>
<div style="position:absolute;left:876px;top:521px;width:1px;height:26px;background:#ffffff;"></div>
<div style="position:absolute;left:877px;top:545px;width:90px;height:1px;background:#a0a0a0;"></div>
<div style="position:absolute;left:966px;top:522px;width:1px;height:24px;background:#a0a0a0;"></div>
<div style="position:absolute;left:876px;top:546px;width:92px;height:1px;background:#696969;"></div>
<div style="position:absolute;left:967px;top:521px;width:1px;height:26px;background:#696969;"></div>
<div style="position:absolute;left:876px;top:553px;width:92px;height:26px;background:#f0f0f0;"></div>
<div style="position:absolute;left:876px;top:553px;width:92px;height:1px;background:#ffffff;"></div>
<div style="position:absolute;left:876px;top:553px;width:1px;height:26px;background:#ffffff;"></div>
<div style="position:absolute;left:877px;top:577px;width:90px;height:1px;background:#a0a0a0;"></div>
<div style="position:absolute;left:966px;top:554px;width:1px;height:24px;background:#a0a0a0;"></div>
<div style="position:absolute;left:876px;top:578px;width:92px;height:1px;background:#696969;"></div>
<div style="position:absolute;left:967px;top:553px;width:1px;height:26px;background:#696969;"></div>
<div style="position:absolute;left:876px;top:585px;width:92px;height:26px;background:#f0f0f0;"></div>
<div style="position:absolute;left:876px;top:585px;width:92px;height:1px;background:#ffffff;"></div>
<div style="position:absolute;left:876px;top:585px;width:1px;height:26px;background:#ffffff;"></div>
<div style="position:absolute;left:877px;top:609px;width:90px;height:1px;background:#a0a0a0;"></div>
<div style="position:absolute;left:966px;top:586px;width:1px;height:24px;background:#a0a0a0;"></div>
<div style="position:absolute;left:876px;top:610px;width:92px;height:1px;background:#696969;"></div>
<div style="position:absolute;left:967px;top:585px;width:1px;height:26px;background:#696969;"></div>
<svg style="position:absolute;left:878px;top:388px" width="22" height="22" shape-rendering="crispEdges">
<rect x="2" y="9" width="1" height="9" fill="#000"/>
<rect x="3" y="8" width="3" height="1" fill="#000"/>
<rect x="3" y="9" width="10" height="1" fill="#000"/>
<rect x="3" y="10" width="9" height="7" fill="#ffff00"/>
<rect x="4" y="11" width="1" height="1" fill="#fff"/><rect x="6" y="11" width="1" height="1" fill="#fff"/><rect x="8" y="11" width="1" height="1" fill="#fff"/><rect x="10" y="11" width="1" height="1" fill="#fff"/>
<rect x="3" y="12" width="1" height="1" fill="#fff"/><rect x="5" y="12" width="1" height="1" fill="#fff"/><rect x="4" y="13" width="1" height="1" fill="#fff"/><rect x="3" y="14" width="1" height="1" fill="#fff"/><rect x="4" y="15" width="1" height="1" fill="#fff"/>
<polygon points="2.5,17.5 6.5,12.5 18.5,12.5 13.5,17.5" fill="#808000" stroke="#000" stroke-width="1" shape-rendering="auto"/>
<rect x="2" y="17" width="12" height="1" fill="#000"/>
<path d="M10.5 6.8 Q13 4.2 15.5 6.5" stroke="#000" stroke-width="1.1" fill="none" shape-rendering="auto"/>
<polygon points="14,6.5 17.2,6 16.2,9" fill="#000" shape-rendering="auto"/>
</svg>
<svg style="position:absolute;left:876px;top:418px" width="22" height="22" shape-rendering="crispEdges">
<rect x="4" y="4" width="14" height="14" fill="#000"/>
<rect x="5" y="5" width="12" height="12" fill="#808000"/>
<rect x="7" y="5" width="8" height="6" fill="#e8e8e8"/>
<rect x="7" y="5" width="8" height="5" fill="#c0c0c0"/>
<rect x="6" y="4" width="10" height="1" fill="#000"/>
<rect x="6" y="5" width="1" height="7" fill="#000"/><rect x="15" y="5" width="1" height="7" fill="#000"/>
<rect x="6" y="11" width="10" height="1" fill="#000"/>
<rect x="7" y="13" width="8" height="5" fill="#000"/>
<rect x="13" y="14" width="2" height="3" fill="#c0c0c0"/>
<rect x="16" y="5" width="1" height="1" fill="#fff"/>
</svg>
<svg style="position:absolute;left:879px;top:472px" width="22" height="22">
<path d="M3.5 3 V15.5 H17" stroke="#6d6d6d" stroke-width="1" fill="none" shape-rendering="crispEdges"/>
<path d="M4 14 L5.5 11.5 L6.2 8 L7.2 5.6 L9.5 5.4 L11.5 6.5 L15.5 11.5 L17.5 9" stroke="#6d6d6d" stroke-width="1.1" fill="none"/>
</svg>
<svg style="position:absolute;left:877px;top:522px" width="22" height="22" shape-rendering="crispEdges">
<rect x="3" y="4" width="6" height="1" fill="#000"/><rect x="8" y="4" width="1" height="5" fill="#000"/><rect x="3" y="8" width="6" height="1" fill="#000"/>
<rect x="3" y="15" width="6" height="1" fill="#000"/><rect x="8" y="15" width="1" height="5" fill="#000"/><rect x="3" y="19" width="6" height="1" fill="#000"/>
<rect x="8" y="11" width="5" height="2" fill="#0000ff"/>
<polygon points="5,12 8.5,8.5 8.5,15.5" fill="#0000ff" shape-rendering="auto"/>
<rect x="12" y="9" width="7" height="6" fill="#000"/><rect x="13" y="10" width="5" height="4" fill="#ff0000"/>
</svg>
<svg style="position:absolute;left:877px;top:554px" width="22" height="22" shape-rendering="crispEdges">
<rect x="10" y="6" width="2" height="14" fill="#8a8f99"/>
<rect x="3" y="5" width="7" height="1" fill="#000"/><rect x="9" y="5" width="1" height="14" fill="#000"/><rect x="3" y="18" width="7" height="1" fill="#000"/>
<rect x="3" y="9" width="7" height="6" fill="#000"/><rect x="3" y="10" width="6" height="4" fill="#ff0000"/>
<rect x="10" y="11" width="6" height="2" fill="#0000ff"/>
<polygon points="15.5,8.5 19.5,12 15.5,15.5" fill="#0000ff" shape-rendering="auto"/>
</svg>
<svg style="position:absolute;left:878px;top:588px" width="22" height="22" fill="none">
<path d="M10.5 9.5 L16.6 3.6" stroke="#0000ff" stroke-width="1.6"/>
<path d="M10.5 9.5 L15.2 14.2" stroke="#0000ff" stroke-width="1.4"/>
<rect x="16" y="16" width="1.3" height="1.3" fill="#0000ff"/>
<path d="M10.8 9.8 L5 4.6" stroke="#0000ff" stroke-width="2.8" stroke-linecap="round"/>
<path d="M8.3 7.5 L5.4 5" stroke="#e8e8ff" stroke-width="0.8"/>
<path d="M10.8 9.2 L5 14.8" stroke="#0000ff" stroke-width="2.8" stroke-linecap="round"/>
<path d="M8.3 11.5 L5.4 14.4" stroke="#e8e8ff" stroke-width="0.8"/>
</svg>
<svg style="position:absolute;left:0;top:0" width="974" height="616" xml:space="preserve"><text x="26" y="17" font-family="'Liberation Sans', sans-serif" font-size="12" font-weight="normal" fill="#000" letter-spacing="0.2" text-anchor="start" >Function</text><text x="221" y="80" font-family="'Liberation Sans', sans-serif" font-size="16" font-weight="bold" fill="#fff" letter-spacing="0" text-anchor="middle" >Temperature</text><text x="46" y="111" font-family="'Liberation Sans', sans-serif" font-size="12" font-weight="normal" fill="#fff" letter-spacing="0.3" text-anchor="start" >Temperature</text><text x="92" y="130" font-family="'Liberation Sans', sans-serif" font-size="11" font-weight="normal" fill="#fff" letter-spacing="0" text-anchor="end" >1</text><text x="92" y="207" font-family="'Liberation Sans', sans-serif" font-size="11" font-weight="normal" fill="#fff" letter-spacing="0" text-anchor="end" >0.6</text><text x="92" y="284" font-family="'Liberation Sans', sans-serif" font-size="11" font-weight="normal" fill="#fff" letter-spacing="0" text-anchor="end" >0.2</text><text x="92" y="361" font-family="'Liberation Sans', sans-serif" font-size="11" font-weight="normal" fill="#fff" letter-spacing="0" text-anchor="end" >-0.2</text><text x="92" y="438" font-family="'Liberation Sans', sans-serif" font-size="11" font-weight="normal" fill="#fff" letter-spacing="0" text-anchor="end" >-0.6</text><text x="92" y="515" font-family="'Liberation Sans', sans-serif" font-size="11" font-weight="normal" fill="#fff" letter-spacing="0" text-anchor="end" >-1</text><text x="106" y="547" font-family="'Liberation Sans', sans-serif" font-size="11" font-weight="normal" fill="#fff" letter-spacing="0" text-anchor="middle" >-1</text><text x="163" y="547" font-family="'Liberation Sans', sans-serif" font-size="11" font-weight="normal" fill="#fff" letter-spacing="0" text-anchor="middle" >-0.6</text><text x="220" y="547" font-family="'Liberation Sans', sans-serif" font-size="11" font-weight="normal" fill="#fff" letter-spacing="0" text-anchor="middle" >-0.2</text><text x="277" y="547" font-family="'Liberation Sans', sans-serif" font-size="11" font-weight="normal" fill="#fff" letter-spacing="0" text-anchor="middle" >0.2</text><text x="334" y="547" font-family="'Liberation Sans', sans-serif" font-size="11" font-weight="normal" fill="#fff" letter-spacing="0" text-anchor="middle" >0.6</text><text x="391" y="547" font-family="'Liberation Sans', sans-serif" font-size="11" font-weight="normal" fill="#fff" letter-spacing="0" text-anchor="middle" >1</text><text x="221" y="566" font-family="'Liberation Sans', sans-serif" font-size="12" font-weight="normal" fill="#fff" letter-spacing="0" text-anchor="middle" >Time</text><text x="584.2 591.2 598.2 605.2 612.2 619.2 626.2 633.2 640.2 647.2 654.2 661.2 668.2 675.2 682.2 689.2 696.2 703.2 710.2 717.2 724.2" y="63" font-family="'Liberation Mono', monospace" font-size="11" font-weight="bold" fill="#000" >Temperature - f(Time)</text><defs><clipPath id="gc"><rect x="455" y="88" width="402" height="510"/></clipPath></defs><g clip-path="url(#gc)"><text x="459.94" y="121" font-family="'Liberation Sans', sans-serif" font-size="11" font-weight="normal" fill="#000" >1</text><text x="459.94" y="141" font-family="'Liberation Sans', sans-serif" font-size="11" font-weight="normal" fill="#000" >2</text><text x="459.94" y="161" font-family="'Liberation Sans', sans-serif" font-size="11" font-weight="normal" fill="#000" >3</text><text x="459.94" y="181" font-family="'Liberation Sans', sans-serif" font-size="11" font-weight="normal" fill="#000" >4</text><text x="459.94" y="201" font-family="'Liberation Sans', sans-serif" font-size="11" font-weight="normal" fill="#000" >5</text><text x="459.94" y="221" font-family="'Liberation Sans', sans-serif" font-size="11" font-weight="normal" fill="#000" >6</text><text x="459.94" y="241" font-family="'Liberation Sans', sans-serif" font-size="11" font-weight="normal" fill="#000" >7</text><text x="459.94" y="261" font-family="'Liberation Sans', sans-serif" font-size="11" font-weight="normal" fill="#000" >8</text><text x="459.94" y="281" font-family="'Liberation Sans', sans-serif" font-size="11" font-weight="normal" fill="#000" >9</text><text x="459.94 465.94" y="301" font-family="'Liberation Sans', sans-serif" font-size="11" font-weight="normal" fill="#000" >10</text><text x="459.94 465.94" y="321" font-family="'Liberation Sans', sans-serif" font-size="11" font-weight="normal" fill="#000" >11</text><text x="459.94 465.94" y="341" font-family="'Liberation Sans', sans-serif" font-size="11" font-weight="normal" fill="#000" >12</text><text x="459.94 465.94" y="361" font-family="'Liberation Sans', sans-serif" font-size="11" font-weight="normal" fill="#000" >13</text><text x="459.94 465.94" y="381" font-family="'Liberation Sans', sans-serif" font-size="11" font-weight="normal" fill="#000" >14</text><text x="459.94 465.94" y="401" font-family="'Liberation Sans', sans-serif" font-size="11" font-weight="normal" fill="#000" >15</text><text x="459.94 465.94" y="421" font-family="'Liberation Sans', sans-serif" font-size="11" font-weight="normal" fill="#000" >16</text><text x="459.94 465.94" y="441" font-family="'Liberation Sans', sans-serif" font-size="11" font-weight="normal" fill="#000" >17</text><text x="459.94 465.94" y="461" font-family="'Liberation Sans', sans-serif" font-size="11" font-weight="normal" fill="#000" >18</text><text x="459.94 465.94" y="481" font-family="'Liberation Sans', sans-serif" font-size="11" font-weight="normal" fill="#000" >19</text><text x="459.94 465.94" y="501" font-family="'Liberation Sans', sans-serif" font-size="11" font-weight="normal" fill="#000" >20</text><text x="459.94 465.94" y="521" font-family="'Liberation Sans', sans-serif" font-size="11" font-weight="normal" fill="#000" >21</text><text x="459.94 465.94" y="541" font-family="'Liberation Sans', sans-serif" font-size="11" font-weight="normal" fill="#000" >22</text><text x="459.94 465.94" y="561" font-family="'Liberation Sans', sans-serif" font-size="11" font-weight="normal" fill="#000" >23</text><text x="459.94 465.94" y="581" font-family="'Liberation Sans', sans-serif" font-size="11" font-weight="normal" fill="#000" >24</text><text x="459.94 465.94" y="601" font-family="'Liberation Sans', sans-serif" font-size="11" font-weight="normal" fill="#000" >25</text></g><text x="489.7 495.7 501.7 507.7" y="101" font-family="'Liberation Mono', monospace" font-size="11" font-weight="normal" fill="#000" >Time</text><text x="666.7 672.7 678.7 684.7 690.7 696.7 702.7 708.7 714.7 720.7 726.7" y="101" font-family="'Liberation Mono', monospace" font-size="11" font-weight="normal" fill="#000" >Temperature</text><text x="652.94" y="121" font-family="'Liberation Sans', sans-serif" font-size="11" font-weight="normal" fill="#000" >0</text><text x="830.94" y="121" font-family="'Liberation Sans', sans-serif" font-size="11" font-weight="normal" fill="#000" >0</text><text x="915.7 921.7" y="54" font-family="'Liberation Mono', monospace" font-size="11" font-weight="normal" fill="#000" >OK</text><text x="906.7 912.7 918.7 924.7 930.7" y="85" font-family="'Liberation Mono', monospace" font-size="11" font-weight="normal" fill="#000" >Apply</text><text x="903.7 909.7 915.7 921.7 927.7 933.7" y="116" font-family="'Liberation Mono', monospace" font-size="11" font-weight="normal" fill="#000" >Cancel</text><text x="898.7 904.7 910.7 916.7" y="402" font-family="'Liberation Mono', monospace" font-size="11" font-weight="normal" fill="#000" >Load</text><text x="896.7 902.7 908.7 914.7" y="432" font-family="'Liberation Mono', monospace" font-size="11" font-weight="normal" fill="#000" >Save</text><text x="900.7 906.7 912.7 918.7 924.7 930.7 936.7 942.7 948.7" y="484" font-family="'Liberation Mono', monospace" font-size="11" font-weight="normal" fill="#808080" >Plot Int.</text><text x="899.7 905.7 911.7 917.7 923.7 929.7" y="537" font-family="'Liberation Mono', monospace" font-size="11" font-weight="normal" fill="#000" >Insert</text><text x="898.7 904.7 910.7 916.7 922.7 928.7" y="569" font-family="'Liberation Mono', monospace" font-size="11" font-weight="normal" fill="#000" >Delete</text><text x="898.7 904.7 910.7 916.7 922.7 928.7 934.7 940.7 946.7 952.7" y="601" font-family="'Liberation Mono', monospace" font-size="11" font-weight="normal" fill="#000" >Delete All</text></svg>
</body></html>
